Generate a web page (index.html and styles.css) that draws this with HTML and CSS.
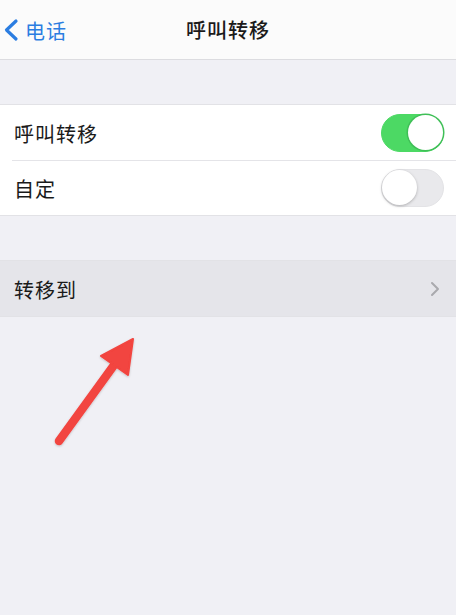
FILE: index.html
```html
<!DOCTYPE html>
<html lang="zh-CN">
<head>
  <meta charset="UTF-8">
  <title>呼叫转移</title>
  <link rel="stylesheet" href="styles.css">
</head>
<body>
  <div class="screen">
    <header class="navbar">
      <a class="back">
        <svg class="back-chevron" width="16" height="24" viewBox="0 0 16 24">
          <path d="M13 3 L3.5 12 L13 21" fill="none" stroke="currentColor" stroke-width="3.2" stroke-linecap="round" stroke-linejoin="round"/>
        </svg>
        <span>电话</span>
      </a>
      <h1 class="title">呼叫转移</h1>
    </header>

    <div class="gap gap-top"></div>

    <section class="group">
      <div class="cell">
        <span class="label">呼叫转移</span>
        <span class="switch on"><span class="knob"></span></span>
      </div>
      <div class="cell">
        <span class="label">自定</span>
        <span class="switch"><span class="knob"></span></span>
      </div>
    </section>

    <div class="gap gap-mid"></div>

    <section class="group">
      <div class="cell pressed">
        <span class="label">转移到</span>
        <svg class="disclosure" width="10" height="16" viewBox="0 0 10 16">
          <path d="M2 2 L8 8 L2 14" fill="none" stroke="#a9a9ae" stroke-width="2" stroke-linecap="round" stroke-linejoin="round"/>
        </svg>
      </div>
    </section>

    <!-- red pointer drawn on top of the list -->
    <svg class="pointer" width="456" height="615" viewBox="0 0 456 615">
      <defs>
        <filter id="soft" x="-20%" y="-20%" width="140%" height="140%">
          <feDropShadow dx="0" dy="1" stdDeviation="1.2" flood-color="#000" flood-opacity="0.2"/>
        </filter>
      </defs>
      <g filter="url(#soft)" fill="#f2443f" stroke="#f2443f">
        <line x1="59" y1="441" x2="117" y2="361" stroke-width="8.5" stroke-linecap="round"/>
        <polygon points="133,339 101,356 128,375" stroke-width="2" stroke-linejoin="round"/>
      </g>
    </svg>
  </div>
</body>
</html>
```

FILE: styles.css
```css
body {
  margin: 0;
  background: #f0f0f5;
  font-family: "Noto Sans CJK SC", "Noto Sans", sans-serif;
  color: #1a1a1a;
}
.screen {
  position: relative;
  width: 456px;
  height: 615px;
  overflow: hidden;
}
.navbar {
  height: 60px;
  background: #fbfbfb;
  border-bottom: 1px solid #dcdce0;
  box-sizing: border-box;
  display: flex;
  align-items: center;
  justify-content: center;
  position: relative;
}
.title {
  margin: 0;
  font-size: 20px;
  font-weight: 500;
  letter-spacing: 1px;
}
.back {
  position: absolute;
  left: 3px;
  top: 0;
  height: 60px;
  display: flex;
  align-items: center;
  gap: 6px;
  color: #2b7de1;
  font-size: 20px;
  letter-spacing: 1px;
}
.gap-top {
  height: 44px;
}
.gap-mid {
  height: 44px;
}
.group {
  background: #fff;
  border-top: 1px solid #e2e2e6;
  border-bottom: 1px solid #e2e2e6;
}
.cell {
  height: 55px;
  display: flex;
  align-items: center;
  justify-content: space-between;
  padding: 0 12px 0 14px;
  position: relative;
}
.cell + .cell::before {
  content: "";
  position: absolute;
  left: 12px;
  right: 0;
  top: 0;
  border-top: 1px solid #e4e4e8;
}
.cell.pressed {
  background: #e5e5ea;
  padding-right: 16px;
}
.label {
  font-size: 20px;
  letter-spacing: 1px;
  padding-top: 2px;
}
.switch {
  width: 63px;
  height: 38px;
  border-radius: 19px;
  background: #e9e9ec;
  position: relative;
  box-sizing: border-box;
  border: 1.5px solid #e3e3e6;
}
.switch .knob {
  position: absolute;
  top: 0;
  left: 0;
  width: 35px;
  height: 35px;
  border-radius: 50%;
  background: #fff;
  box-shadow: 0 1px 3px rgba(0, 0, 0, 0.25);
}
.switch.on {
  background: #4cd964;
  border-color: #4cd964;
}
.switch.on .knob {
  left: auto;
  right: 0;
  box-shadow: 0 0 0 1.5px #3fbf57;
}
.pointer {
  position: absolute;
  left: 0;
  top: 0;
  pointer-events: none;
}
```
